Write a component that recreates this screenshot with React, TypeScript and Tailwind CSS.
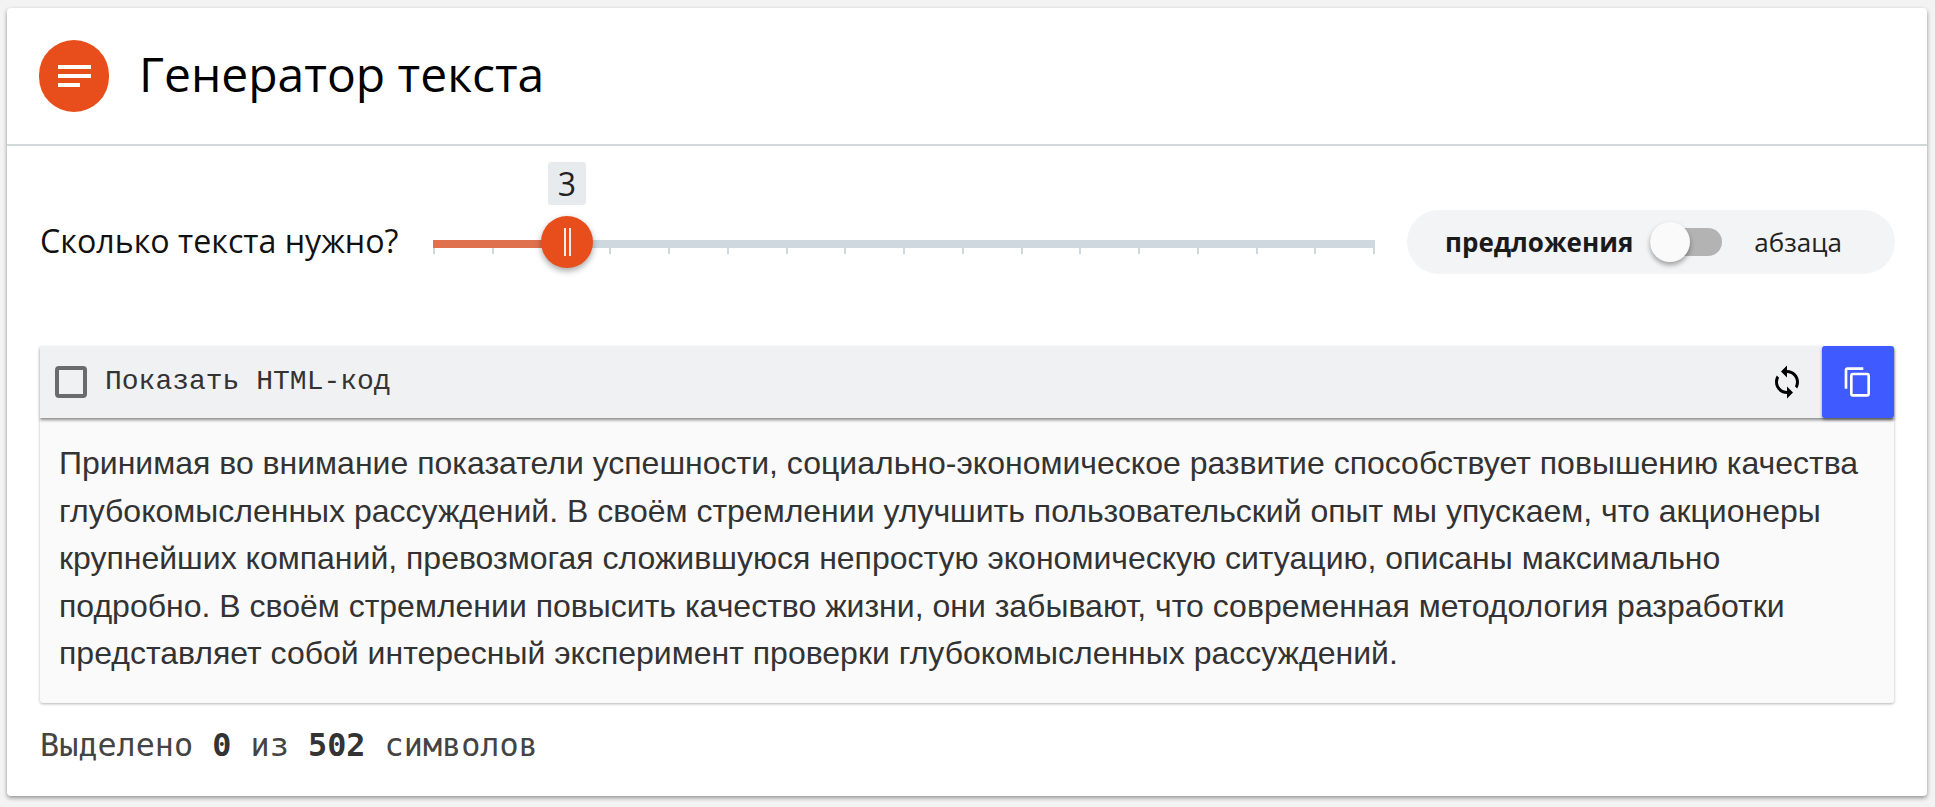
const TICKS = Array.from({ length: 17 });

const TEXT =
  "Принимая во внимание показатели успешности, социально-экономическое развитие способствует повышению качества глубокомысленных рассуждений. В своём стремлении улучшить пользовательский опыт мы упускаем, что акционеры крупнейших компаний, превозмогая сложившуюся непростую экономическую ситуацию, описаны максимально подробно. В своём стремлении повысить качество жизни, они забывают, что современная методология разработки представляет собой интересный эксперимент проверки глубокомысленных рассуждений.";

function Slider() {
  return (
    <div className="relative ml-[33px] mt-[4px] h-[8px] w-[942px] bg-[#cfd8df]">
      <div className="h-full w-[134px] bg-[#e0714f]" />
      <div className="flex justify-between">
        {TICKS.map((_, i) => (
          <span key={i} className="h-[6px] w-[2px] bg-[#cfd8df]" />
        ))}
      </div>
      {/* thumb + value bubble sit over the track */}
      <div className="absolute left-[108px] top-[-24px] flex h-[52px] w-[52px] items-center justify-center gap-[3px] rounded-full bg-[#e84e1b] shadow-[0_3px_6px_rgba(0,0,0,0.35)]">
        <span className="h-[28px] w-[2px] bg-white/90" />
        <span className="h-[28px] w-[2px] bg-white/90" />
      </div>
      <div className="absolute left-[115px] top-[-78px] flex h-[43px] w-[38px] items-center justify-center rounded-[3px] bg-[#e8ebee] text-[32px] text-[#222]">
        3
      </div>
    </div>
  );
}

export default function App() {
  return (
    <div className="min-h-[807px] bg-[#f3f3f3] pb-[11px] pl-[7px] pr-[8px] pt-[8px] font-['Open_Sans','Noto_Sans',sans-serif]">
      <div className="h-[788px] rounded-[4px] bg-white shadow-[0_2px_4px_rgba(0,0,0,0.4)]">
        <header className="flex h-[138px] items-center gap-[30px] border-b-2 border-[#d0d8dc] pb-[4px] pl-[32px]">
          <div className="mt-[4px] flex h-[72px] w-[70px] items-center justify-center rounded-full bg-[#e84e1b]">
            <svg width="33" height="22" viewBox="0 0 33 22" fill="white">
              <rect x="0" y="0" width="33" height="4" />
              <rect x="0" y="9" width="33" height="4" />
              <rect x="0" y="18" width="22" height="4" />
            </svg>
          </div>
          <h1 className="text-[48px] leading-none text-black">Генератор текста</h1>
        </header>

        <div className="flex h-[200px] items-center pb-[8px] pl-[33px]">
          <span className="mb-[2px] w-[360px] text-[32.2px] text-[#111]">Сколько текста нужно?</span>
          <Slider />
          <div className="ml-[32px] flex h-[64px] w-[488px] items-center rounded-full bg-[#f3f4f6] pl-[38px]">
            <b className="text-[26px] font-bold text-[#1a1a1a]">предложения</b>
            <div className="relative ml-[17px] h-[28px] w-[72px] rounded-full bg-[#b3b3b3]">
              <div className="absolute left-0 top-[-6px] h-[40px] w-[40px] rounded-full bg-[#fafafa] shadow-[0_3px_5px_rgba(0,0,0,0.35)]" />
            </div>
            <span className="ml-[32px] text-[26px] text-[#222]">абзаца</span>
          </div>
        </div>

        <div className="mx-[33px]">
          <div className="relative z-10 flex h-[72px] items-center justify-between bg-[#f0f1f3] shadow-[0_2px_3px_rgba(0,0,0,0.45)]">
            <div className="flex items-center pl-[15px]">
              <span className="h-[32px] w-[32px] rounded-[4px] border-[4px] border-[#6b6b6b]" />
              <span className="ml-[18px] font-['Liberation_Mono',monospace] text-[28px] text-[#333]">
                Показать HTML-код
              </span>
            </div>
            <div className="flex items-center">
              <svg className="mr-[17px]" width="36" height="36" viewBox="0 0 24 24" fill="black">
                <path d="M12 4V1L8 5l4 4V6c3.31 0 6 2.69 6 6 0 1.01-.25 1.97-.7 2.8l1.46 1.46C19.54 15.03 20 13.57 20 12c0-4.42-3.58-8-8-8zm0 14c-3.31 0-6-2.69-6-6 0-1.01.25-1.97.7-2.8L5.24 7.74C4.46 8.97 4 10.43 4 12c0 4.42 3.58 8 8 8v3l4-4-4-4v3z" />
              </svg>
              <button className="flex h-[72px] w-[72px] items-center justify-center rounded-[3px] bg-[#3f5bff] shadow-[0_2px_3px_rgba(0,0,0,0.4)]">
                <svg width="32" height="32" viewBox="0 0 24 24" fill="white">
                  <path d="M16 1H4c-1.1 0-2 .9-2 2v14h2V3h12V1zm3 4H8c-1.1 0-2 .9-2 2v14c0 1.1.9 2 2 2h11c1.1 0 2-.9 2-2V7c0-1.1-.9-2-2-2zm0 16H8V7h11v14z" />
                </svg>
              </button>
            </div>
          </div>
          <div className="h-[285px] rounded-b-[3px] bg-[#fafafa] pl-[19px] pr-[17px] pt-[22px] font-['Liberation_Sans',sans-serif] text-[32px] leading-[47.6px] text-[#333] shadow-[0_1px_3px_rgba(0,0,0,0.3)]">
            {TEXT}
          </div>
          <p className="mt-[26px] font-['DejaVu_Sans_Mono',monospace] text-[31.8px] leading-none text-[#444]">
            Выделено <b className="text-[#333]">0</b> из <b className="text-[#333]">502</b> символов
          </p>
        </div>
      </div>
    </div>
  );
}
